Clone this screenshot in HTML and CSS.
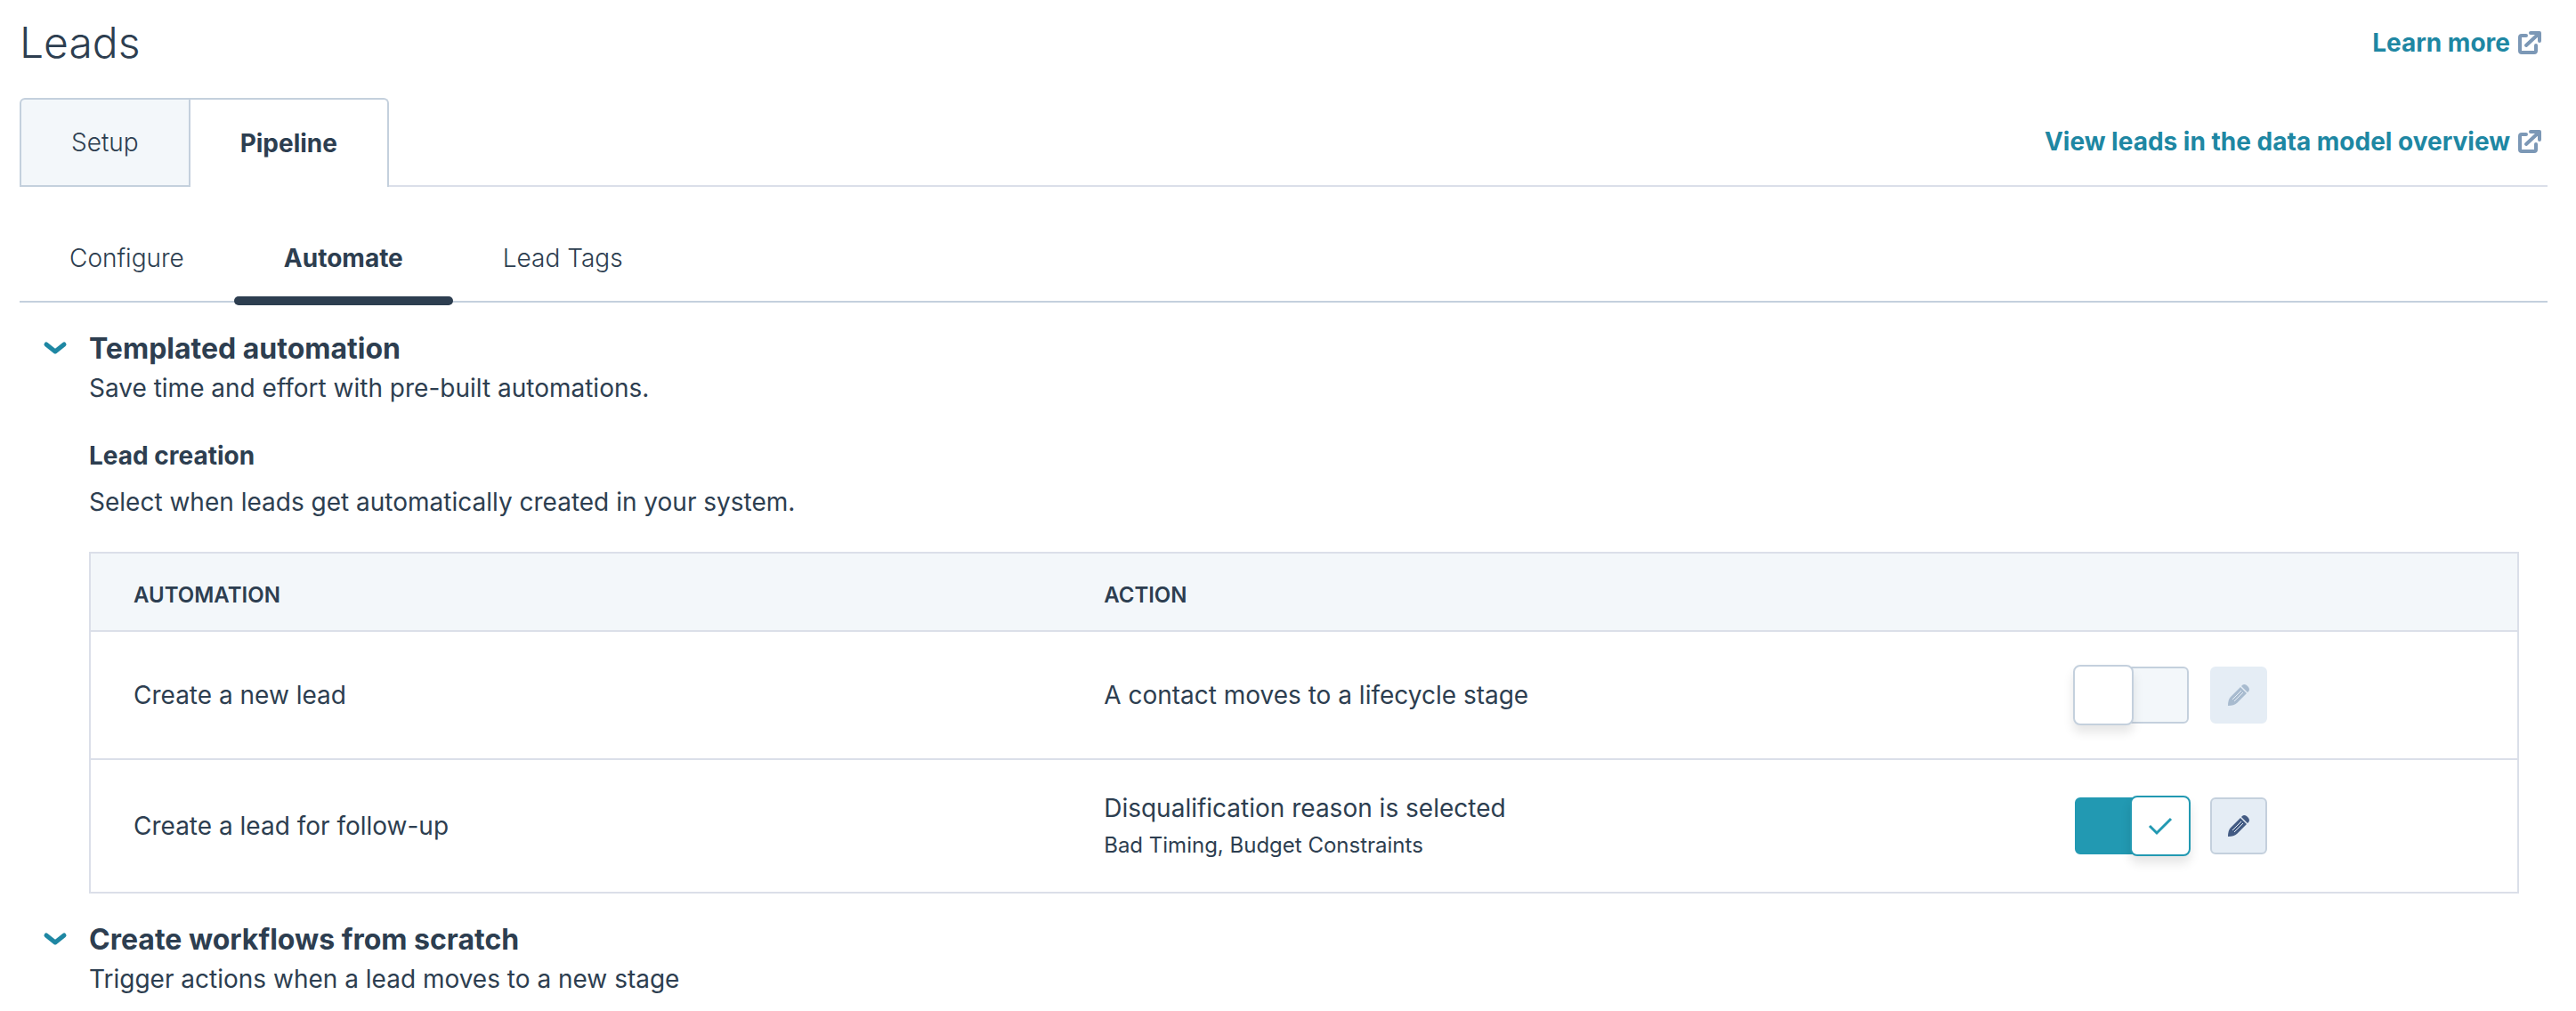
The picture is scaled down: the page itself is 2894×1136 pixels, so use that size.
FILE: index.html
```html
<!DOCTYPE html>
<html lang="en">
  <head>
    <meta charset="UTF-8" />
    <meta name="viewport" content="width=device-width, initial-scale=1.0" />
    <title>Leads</title>
    <link rel="stylesheet" href="styles.css" />
  </head>
  <body>
    <svg class="icon-defs" aria-hidden="true">
      <symbol id="icon-external" viewBox="0 0 28 28">
        <path d="M10 6H5a2 2 0 0 0-2 2v15a2 2 0 0 0 2 2h14a2 2 0 0 0 2-2v-6M10 17 24 4M15 3h10v9" />
      </symbol>
      <symbol id="icon-chevron" viewBox="0 0 28 20">
        <path d="M4 5l10 8 10-8" />
      </symbol>
      <symbol id="icon-pencil" viewBox="0 0 28 28">
        <path class="fill" d="M2 26q0-7 3-10L16 5l7 7-11 11q-3 3-10 3zM17 4l1-1q2-2 5 0l2 2q2 3 0 5l-1 1z" />
        <path class="lines" d="M7 19 17 9M9 21l10-10" />
      </symbol>
    </svg>
    <header class="page-header">
      <h1 class="page-title">Leads</h1>
      <a class="external-link" href="#">
        Learn more
        <svg class="icon-external"><use href="#icon-external" /></svg>
      </a>
    </header>
    <nav class="tabs">
      <a class="tab" href="#">Setup</a>
      <a class="tab tab-active" href="#">Pipeline</a>
      <a class="external-link tabs-link" href="#">
        View leads in the data model overview
        <svg class="icon-external"><use href="#icon-external" /></svg>
      </a>
    </nav>
    <nav class="subtabs">
      <a class="subtab" href="#">Configure</a>
      <a class="subtab subtab-active" href="#">Automate</a>
      <a class="subtab" href="#">Lead Tags</a>
    </nav>
    <main>
      <section class="section">
        <button class="section-toggle" type="button" aria-label="Toggle templated automation" aria-expanded="true">
          <svg class="icon-chevron"><use href="#icon-chevron" /></svg>
        </button>
        <div class="section-body">
          <h2 class="section-title">Templated automation</h2>
          <p class="section-text">Save time and effort with pre-built automations.</p>
          <h3 class="group-title">Lead creation</h3>
          <p class="group-text">Select when leads get automatically created in your system.</p>
          <table class="automations">
            <thead>
              <tr>
                <th>Automation</th>
                <th>Action</th>
                <th></th>
              </tr>
            </thead>
            <tbody>
              <tr>
                <td>Create a new lead</td>
                <td>A contact moves to a lifecycle stage</td>
                <td>
                  <div class="controls">
                    <label class="toggle">
                      <input class="toggle-input" type="checkbox" aria-label="Create a new lead" />
                      <span class="toggle-handle"></span>
                    </label>
                    <button class="edit-btn" type="button" aria-label="Edit" disabled>
                      <svg class="icon-pencil"><use href="#icon-pencil" /></svg>
                    </button>
                  </div>
                </td>
              </tr>
              <tr>
                <td>Create a lead for follow-up</td>
                <td>
                  Disqualification reason is selected
                  <div class="action-detail">Bad Timing, Budget Constraints</div>
                </td>
                <td>
                  <div class="controls">
                    <label class="toggle">
                      <input class="toggle-input" type="checkbox" aria-label="Create a lead for follow-up" checked />
                      <span class="toggle-handle">
                        <svg class="icon-check" viewBox="0 0 28 28"><path d="M2 14l8 8L26 6" /></svg>
                      </span>
                    </label>
                    <button class="edit-btn" type="button" aria-label="Edit">
                      <svg class="icon-pencil"><use href="#icon-pencil" /></svg>
                    </button>
                  </div>
                </td>
              </tr>
            </tbody>
          </table>
        </div>
      </section>
      <section class="section">
        <button class="section-toggle" type="button" aria-label="Toggle create workflows" aria-expanded="true">
          <svg class="icon-chevron"><use href="#icon-chevron" /></svg>
        </button>
        <div class="section-body">
          <h2 class="section-title">Create workflows from scratch</h2>
          <p class="section-text">Trigger actions when a lead moves to a new stage</p>
        </div>
      </section>
    </main>
  </body>
</html>
```
FILE: styles.css
```css
* {
  box-sizing: border-box;
}

body {
  margin: 0;
  padding: 0 32px 0 22px;
  background-color: #fff;
  color: #2d3e50;
  font-family: Inter, sans-serif;
  font-size: 28px;
  font-weight: 300;
  line-height: 44px;
}

h1,
h2,
h3,
p {
  margin: 0;
}

a {
  color: inherit;
  text-decoration: none;
}

.icon-defs {
  display: none;
}

.page-header {
  display: flex;
  align-items: center;
  justify-content: space-between;
  height: 96px;
}

.page-title {
  font-size: 48px;
  font-weight: 300;
}

.external-link {
  display: flex;
  align-items: center;
  gap: 8px;
  margin-right: 6px;
  color: #1e87a3;
  font-weight: 700;
}

.icon-external {
  width: 28px;
  height: 28px;
  fill: none;
  stroke: #7c98b6;
  stroke-width: 4;
  stroke-linecap: round;
  stroke-linejoin: round;
}

.tabs {
  display: flex;
  height: 100px;
  margin-top: 14px;
  border-bottom: 2px solid #dbdfe9;
}

.tab {
  display: flex;
  align-items: center;
  height: 100px;
  padding: 0 56px;
  border: 2px solid #c4d0dd;
  border-top-left-radius: 6px;
  background-color: #f3f7fa;
}

.tab-active {
  border-bottom: 0;
  border-left: 0;
  border-radius: 0 6px 0 0;
  background-color: #fff;
  font-weight: 700;
}

.tabs-link {
  margin-left: auto;
}

.subtabs {
  display: flex;
  height: 130px;
  padding-top: 30px;
  border-bottom: 2px solid #c4d0dd;
}

.subtab {
  display: flex;
  align-items: center;
  height: 100px;
  padding: 0 56px;
}

.subtab-active {
  position: relative;
  font-weight: 700;
}

.subtab-active::after {
  content: "";
  position: absolute;
  right: 0;
  bottom: -3px;
  left: 0;
  height: 10px;
  border-radius: 5px;
  background-color: #2d3e50;
}

.section {
  display: flex;
  padding: 30px 32px 0 26px;
}

.section-toggle {
  display: flex;
  flex-shrink: 0;
  width: 52px;
  height: 44px;
  padding: 12px 0;
  border: 0;
  background: none;
}

.icon-chevron {
  width: 28px;
  height: 20px;
  fill: none;
  stroke: #1e87a3;
  stroke-width: 5;
  stroke-linecap: round;
  stroke-linejoin: round;
}

.section-body {
  flex: 1;
}

.section-title {
  font-size: 32px;
  font-weight: 700;
}

.group-title {
  margin-top: 32px;
  font-size: 28px;
  font-weight: 700;
}

.group-text {
  margin-top: 8px;
}

.section-text,
.group-text,
.automations {
  font-weight: 400;
}

.automations {
  width: 100%;
  margin-top: 34px;
  border: 2px solid #dbdfe9;
  border-collapse: collapse;
  table-layout: fixed;
}

.automations th {
  height: 88px;
  padding: 8px 48px 0;
  background-color: #f3f7fa;
  font-size: 24px;
  font-weight: 600;
  text-align: left;
  text-transform: uppercase;
}

.automations td {
  height: 144px;
  padding: 0 48px;
  border-top: 2px solid #dbdfe9;
}

.automations tr:last-child td {
  height: 150px;
}

.automations th:nth-child(-n + 2) {
  width: 40%;
}

.action-detail {
  font-size: 24px;
  line-height: 40px;
}

.controls {
  display: flex;
  gap: 24px;
}

.toggle {
  position: relative;
  width: 128px;
  height: 64px;
}

.toggle-input {
  display: block;
  appearance: none;
  width: 128px;
  height: 64px;
  margin: 0;
  border: 2px solid #c4d0dd;
  border-radius: 6px;
  background-color: #f3f7fa;
}

.toggle-input:checked {
  border-color: #2299b2;
  background-color: #2299b2;
}

.toggle-handle {
  position: absolute;
  top: -2px;
  left: -2px;
  display: flex;
  align-items: center;
  justify-content: center;
  width: 68px;
  height: 68px;
  border: 2px solid #c4d0dd;
  border-radius: 8px;
  background-color: #fff;
  box-shadow: 0 8px 12px rgba(0, 0, 0, 0.1);
}

.toggle-input:checked + .toggle-handle {
  right: -2px;
  left: auto;
  border-color: #2299b2;
}

.icon-check {
  width: 28px;
  height: 28px;
  fill: none;
  stroke: #2299b2;
  stroke-width: 3;
}

.edit-btn {
  display: flex;
  align-items: center;
  justify-content: center;
  width: 64px;
  height: 64px;
  padding: 0;
  border: 2px solid #c4d0dd;
  border-radius: 6px;
  background-color: #e5edf5;
  color: #435b83;
}

.edit-btn:disabled {
  border-color: #e5edf5;
  color: #a8bbcf;
}

.icon-pencil {
  width: 28px;
  height: 28px;
}

.fill {
  fill: currentColor;
}

.lines {
  stroke: #e5edf5;
  stroke-width: 1;
}
```
